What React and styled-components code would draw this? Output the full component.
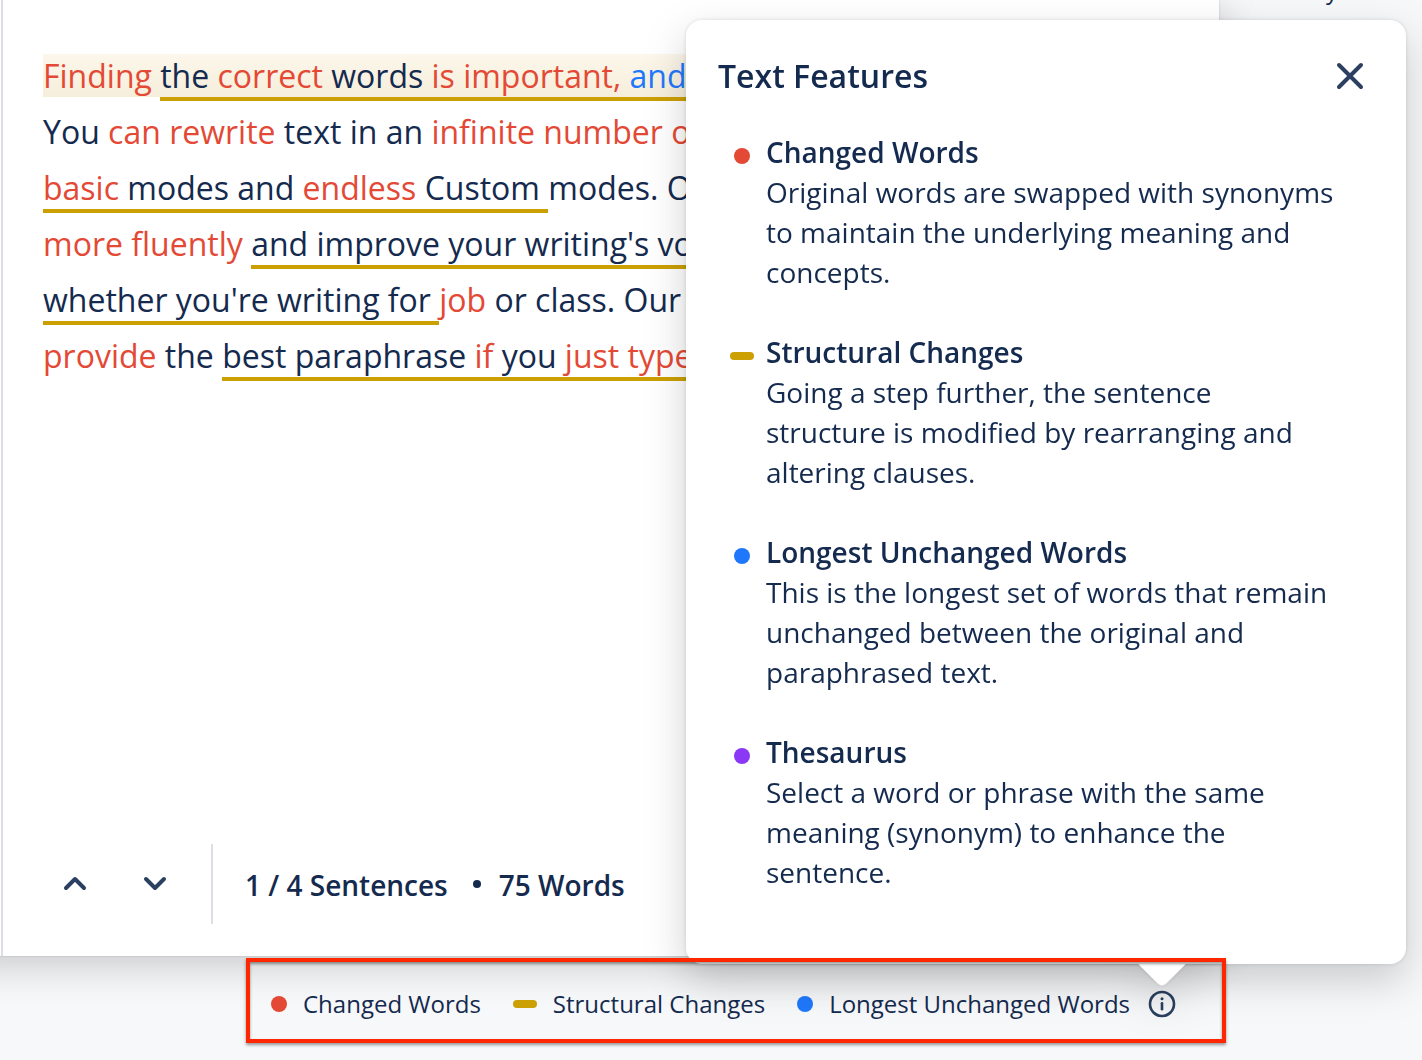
import React from "react";
import styled, { createGlobalStyle, css } from "styled-components";

const color = {
  ink: "#142a4e",
  icon: "#2b3f60",
  red: "#e34935",
  gold: "#cc9f02",
  blue: "#1f78fb",
  purple: "#8a38f5",
  rule: "#dcdee6",
  page: "#f7f8fa",
};

const GlobalStyle = createGlobalStyle`
  *, *::before, *::after { box-sizing: border-box; }
  body {
    margin: 0;
    background: ${color.page};
    color: ${color.ink};
    font-family: "Open Sans", "Noto Sans", sans-serif;
  }
  h2, h3, p, ul { margin: 0; padding: 0; }
  ul { list-style: none; }
`;

const Page = styled.div`
  display: grid;
  grid-template-columns: minmax(0, 1fr) 203px;
  grid-template-rows: 1fr auto;
  height: 100vh;
  overflow: hidden;
`;

const Workspace = styled.main`
  display: flex;
  margin-left: -48px;
  padding-left: 49px;
  background: #fff;
  box-shadow: 0 8px 40px rgba(0, 0, 0, 0.2), 0 0 2px rgba(0, 0, 0, 0.16);
`;

const Editor = styled.section`
  flex: 1;
  min-width: 0;
  display: flex;
  flex-direction: column;
  justify-content: space-between;
  border-left: 2px solid ${color.rule};
`;

const Output = styled.div`
  padding: 48px 40px 0;
  font-size: 32px;
  line-height: 56px;
  white-space: pre;
  overflow: hidden;
`;

const Line = styled.p`
  height: 56px;
`;

const Highlight = styled.span`
  background: linear-gradient(#fcf7eb, #f6eedb);
`;

const Changed = styled.span`
  color: ${color.red};
`;

const Unchanged = styled.span`
  color: ${color.blue};
`;

const Structural = styled.span`
  border-bottom: 4px solid ${color.gold};
`;

const Footer = styled.footer`
  display: flex;
  align-items: center;
  padding: 0 32px 32px;
`;

const IconButton = styled.button`
  display: flex;
  align-items: center;
  justify-content: center;
  width: ${(p) => p.$width}px;
  height: ${(p) => p.$height}px;
  padding: 0;
  border: 0;
  background: none;
  color: ${color.icon};
  cursor: pointer;
`;

const Steps = styled.div`
  display: flex;
  padding-right: 16px;
  border-right: 2px solid ${color.rule};
`;

const Stats = styled.p`
  display: flex;
  align-items: center;
  padding: 2px 0 0 32px;
  font-size: 28px;
  line-height: 40px;
  font-weight: 600;
  white-space: nowrap;
`;

const Separator = styled.span`
  width: 8px;
  height: 8px;
  margin: 0 18px 2px 25px;
  border-radius: 50%;
  background: currentColor;
`;

const Sidebar = styled.aside`
  overflow: hidden;
  padding-left: 107px;
  font-size: 24px;
  line-height: 32px;
`;

const SidebarLabel = styled.p`
  margin-top: -26px;
`;

const LegendBar = styled.div`
  position: relative;
  grid-column: 1 / -1;
  display: flex;
  align-items: center;
  gap: 16px;
  height: 85px;
  margin: 2px 196px 17px 246px;
  padding: 7px 24px 0 25px;

  &::after {
    content: "";
    position: absolute;
    z-index: 2;
    inset: 0;
    border: 4px solid #ff2600;
    box-shadow: 0 2px 3px rgba(0, 0, 0, 0.4), inset 0 2px 3px rgba(0, 0, 0, 0.4);
    pointer-events: none;
  }
`;

const LegendList = styled.ul`
  position: relative;
  z-index: 1;
  display: flex;
  gap: 32px;
`;

const LegendItem = styled.li`
  display: flex;
  align-items: center;
  gap: 16px;
  font-size: 24px;
  line-height: 32px;
  white-space: nowrap;
`;

const Marker = styled.span`
  flex: none;
  background: ${(p) => p.$color};
  ${(p) =>
    p.$bar
      ? css`
          width: 24px;
          height: 8px;
          border-radius: 4px;
        `
      : css`
          width: 16px;
          height: 16px;
          border-radius: 50%;
        `}
`;

const InfoAnchor = styled.div`
  position: relative;
  display: flex;
`;

const Popover = styled.section`
  position: absolute;
  z-index: 1;
  right: -228px;
  bottom: 56px;
  width: 720px;
  padding: 32px 32px 72px;
  border-radius: 16px;
  background: #fff;
  filter: drop-shadow(0 0 2px rgba(0, 0, 0, 0.12))
    drop-shadow(0 16px 20px rgba(0, 0, 0, 0.18));

  &::after {
    content: "";
    position: absolute;
    right: 225px;
    bottom: -16px;
    width: 38px;
    height: 38px;
    border-radius: 6px;
    background: #fff;
    transform: rotate(45deg);
  }
`;

const PopoverHeader = styled.header`
  display: flex;
  align-items: center;
  justify-content: space-between;
  height: 48px;
  margin-bottom: 32px;
`;

const PopoverTitle = styled.h2`
  font-size: 32px;
  line-height: 48px;
  font-weight: 600;
`;

const FeatureList = styled.ul`
  display: flex;
  flex-direction: column;
  gap: 40px;
  padding: 0 36px 0 12px;
`;

const Feature = styled.li`
  display: flex;
  gap: 12px;
  font-size: 28px;
  line-height: 40px;
`;

const MarkerSlot = styled.div`
  flex: none;
  display: flex;
  align-items: center;
  justify-content: center;
  width: 24px;
  height: 48px;
`;

const FeatureTitle = styled.h3`
  font-size: 28px;
  line-height: 40px;
  font-weight: 600;
`;

const FeatureText = styled.p`
  white-space: pre-line;
`;

const legend = [
  { label: "Changed Words", color: color.red },
  { label: "Structural Changes", color: color.gold, bar: true },
  { label: "Longest Unchanged Words", color: color.blue },
];

const features = [
  {
    ...legend[0],
    text: "Original words are swapped with synonyms\nto maintain the underlying meaning and\nconcepts.",
  },
  {
    ...legend[1],
    text: "Going a step further, the sentence\nstructure is modified by rearranging and\naltering clauses.",
  },
  {
    ...legend[2],
    text: "This is the longest set of words that remain\nunchanged between the original and\nparaphrased text.",
  },
  {
    label: "Thesaurus",
    color: color.purple,
    text: "Select a word or phrase with the same\nmeaning (synonym) to enhance the\nsentence.",
  },
];

function Chevron({ points }) {
  return (
    <svg width="32" height="32" viewBox="0 0 32 32" fill="none" stroke="currentColor" strokeWidth="4" strokeLinecap="round" strokeLinejoin="round" aria-hidden="true">
      <polyline points={points} />
    </svg>
  );
}

function CloseIcon() {
  return (
    <svg width="32" height="32" viewBox="0 0 32 32" stroke="currentColor" strokeWidth="4" strokeLinecap="round" aria-hidden="true">
      <path d="M5 5L27 27M27 5L5 27" />
    </svg>
  );
}

function InfoIcon() {
  return (
    <svg width="32" height="32" viewBox="0 0 32 32" fill="none" aria-hidden="true">
      <circle cx="16" cy="16" r="12" stroke="currentColor" strokeWidth="2.6" />
      <circle cx="16" cy="10.7" r="1.5" fill="currentColor" />
      <path d="M16 15.3V21.2" stroke="currentColor" strokeWidth="2.6" strokeLinecap="round" />
    </svg>
  );
}

export default function App() {
  return (
    <>
      <GlobalStyle />
      <Page>
        <Workspace>
          <Editor>
            <Output>
              <Line>
                <Highlight>
                  <Changed>Finding</Changed>{" "}
                  <Structural>
                    the <Changed>correct</Changed> words <Changed>is important,</Changed>{" "}
                    <Unchanged>and</Unchanged>{" "}
                  </Structural>
                </Highlight>
              </Line>
              <Line>
                You <Changed>can rewrite</Changed> text in an <Changed>infinite number of</Changed>
              </Line>
              <Line>
                <Structural>
                  <Changed>basic</Changed> modes and <Changed>endless</Changed> Custom{" "}
                </Structural>
                modes. O
              </Line>
              <Line>
                <Changed>more fluently</Changed> <Structural>and improve your writing's vo</Structural>
              </Line>
              <Line>
                <Structural>whether you're writing for </Structural>
                <Changed>job</Changed> or class. Our
              </Line>
              <Line>
                <Changed>provide</Changed> the{" "}
                <Structural>
                  best paraphrase <Changed>if</Changed> you <Changed>just type</Changed>
                </Structural>
              </Line>
            </Output>
            <Footer>
              <Steps>
                <IconButton $width={80} $height={80} aria-label="Previous sentence">
                  <Chevron points="7,20 16,11 25,20" />
                </IconButton>
                <IconButton $width={80} $height={80} aria-label="Next sentence">
                  <Chevron points="7,11 16,20 25,11" />
                </IconButton>
              </Steps>
              <Stats>
                <span>1 / 4 Sentences</span>
                <Separator />
                <span>75 Words</span>
              </Stats>
            </Footer>
          </Editor>
        </Workspace>
        <Sidebar>
          <SidebarLabel>y</SidebarLabel>
        </Sidebar>
        <LegendBar>
          <LegendList>
            {legend.map((item) => (
              <LegendItem key={item.label}>
                <Marker $color={item.color} $bar={item.bar} />
                {item.label}
              </LegendItem>
            ))}
          </LegendList>
          <InfoAnchor>
            <IconButton $width={32} $height={32} aria-label="About text features">
              <InfoIcon />
            </IconButton>
            <Popover aria-label="Text Features">
              <PopoverHeader>
                <PopoverTitle>Text Features</PopoverTitle>
                <IconButton $width={48} $height={48} aria-label="Close">
                  <CloseIcon />
                </IconButton>
              </PopoverHeader>
              <FeatureList>
                {features.map((item) => (
                  <Feature key={item.label}>
                    <MarkerSlot>
                      <Marker $color={item.color} $bar={item.bar} />
                    </MarkerSlot>
                    <div>
                      <FeatureTitle>{item.label}</FeatureTitle>
                      <FeatureText>{item.text}</FeatureText>
                    </div>
                  </Feature>
                ))}
              </FeatureList>
            </Popover>
          </InfoAnchor>
        </LegendBar>
      </Page>
    </>
  );
}
